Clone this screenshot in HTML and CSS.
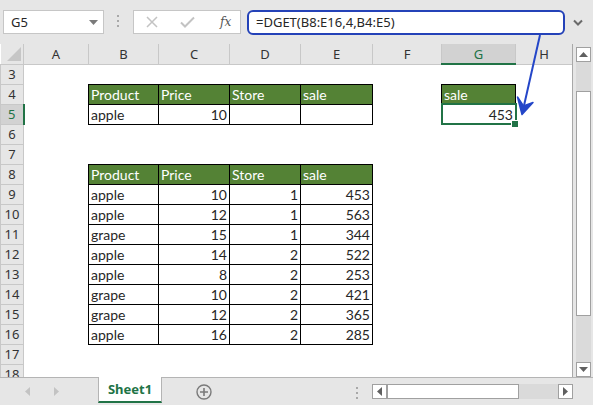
FILE: index.html
```html
<!DOCTYPE html>
<html lang="en">
<head>
    <meta charset="UTF-8">
    <title>DGET - Sheet1</title>
    <link rel="stylesheet" href="styles.css">
</head>
<body>
    <div class="formula-bar">
        <div class="name-box">
            <span>G5</span>
            <svg class="caret" width="9" height="5" viewBox="0 0 9 5"><path d="M0 0H9L4.5 5Z" fill="#7a7a7a"/></svg>
        </div>
        <div class="grip"><i></i><i></i><i></i></div>
        <div class="fx-box">
            <svg width="12" height="12" viewBox="0 0 12 12"><path d="M1 1L11 11M11 1L1 11" stroke="#c3c3c3" stroke-width="1.5"/></svg>
            <svg width="15" height="12" viewBox="0 0 15 12"><path d="M1 6.5L5 10.5L14 1.5" stroke="#c3c3c3" stroke-width="2" fill="none"/></svg>
            <span class="fx">fx</span>
        </div>
        <div class="formula">=DGET(B8:E16,4,B4:E5)</div>
        <svg class="expand" width="10" height="7" viewBox="0 0 10 7"><path d="M1 1.5L5 5.5L9 1.5" stroke="#6a6a6a" stroke-width="2" fill="none"/></svg>
    </div>

    <div class="main">
        <div class="sheet">
            <table class="grid">
                <colgroup>
                    <col class="c-rh"><col class="c-a"><col class="c-b"><col class="c-c"><col class="c-d">
                    <col class="c-e"><col class="c-f"><col class="c-g"><col class="c-h">
                </colgroup>
                <tr class="colhead">
                    <th class="corner"><svg width="14" height="14" viewBox="0 0 14 14"><path d="M14 0V14H0Z" fill="#c6c6c6"/></svg></th>
                    <th>A</th><th>B</th><th>C</th><th>D</th><th>E</th><th>F</th><th class="sel">G</th><th>H</th>
                </tr>
                <tr><th class="rh">3</th><td></td><td></td><td></td><td></td><td></td><td></td><td></td><td></td></tr>
                <tr>
                    <th class="rh">4</th><td></td>
                    <td class="t h">Product</td><td class="t h">Price</td><td class="t h">Store</td><td class="t h">sale</td>
                    <td></td><td class="t h">sale</td><td></td>
                </tr>
                <tr>
                    <th class="rh sel">5</th><td></td>
                    <td class="t">apple</td><td class="t n">10</td><td class="t"></td><td class="t"></td>
                    <td></td><td class="t n active">453</td><td></td>
                </tr>
                <tr><th class="rh">6</th><td></td><td></td><td></td><td></td><td></td><td></td><td></td><td></td></tr>
                <tr><th class="rh">7</th><td></td><td></td><td></td><td></td><td></td><td></td><td></td><td></td></tr>
                <tr>
                    <th class="rh">8</th><td></td>
                    <td class="t h">Product</td><td class="t h">Price</td><td class="t h">Store</td><td class="t h">sale</td>
                    <td></td><td></td><td></td>
                </tr>
                <tr><th class="rh">9</th><td></td><td class="t">apple</td><td class="t n">10</td><td class="t n">1</td><td class="t n">453</td><td></td><td></td><td></td></tr>
                <tr><th class="rh">10</th><td></td><td class="t">apple</td><td class="t n">12</td><td class="t n">1</td><td class="t n">563</td><td></td><td></td><td></td></tr>
                <tr><th class="rh">11</th><td></td><td class="t">grape</td><td class="t n">15</td><td class="t n">1</td><td class="t n">344</td><td></td><td></td><td></td></tr>
                <tr><th class="rh">12</th><td></td><td class="t">apple</td><td class="t n">14</td><td class="t n">2</td><td class="t n">522</td><td></td><td></td><td></td></tr>
                <tr><th class="rh">13</th><td></td><td class="t">apple</td><td class="t n">8</td><td class="t n">2</td><td class="t n">253</td><td></td><td></td><td></td></tr>
                <tr><th class="rh">14</th><td></td><td class="t">grape</td><td class="t n">10</td><td class="t n">2</td><td class="t n">421</td><td></td><td></td><td></td></tr>
                <tr><th class="rh">15</th><td></td><td class="t">grape</td><td class="t n">12</td><td class="t n">2</td><td class="t n">365</td><td></td><td></td><td></td></tr>
                <tr><th class="rh">16</th><td></td><td class="t">apple</td><td class="t n">16</td><td class="t n">2</td><td class="t n">285</td><td></td><td></td><td></td></tr>
                <tr><th class="rh">17</th><td></td><td></td><td></td><td></td><td></td><td></td><td></td><td></td></tr>
                <tr><th class="rh">18</th><td></td><td></td><td></td><td></td><td></td><td></td><td></td><td></td></tr>
            </table>
        </div>
        <div class="vscroll">
            <div class="sb-btn"><svg width="9" height="5" viewBox="0 0 9 5"><path d="M0 5H9L4.5 0Z" fill="#606060"/></svg></div>
            <div class="sb-track">
                <div class="sb-gap-top"></div>
                <div class="sb-thumb"></div>
                <div class="sb-gap"></div>
            </div>
            <div class="sb-btn"><svg width="9" height="5" viewBox="0 0 9 5"><path d="M0 0H9L4.5 5Z" fill="#606060"/></svg></div>
        </div>
    </div>

    <div class="tabbar">
        <div class="nav">
            <svg width="5" height="9" viewBox="0 0 5 9"><path d="M5 0V9L0 4.5Z" fill="#c3c3c3"/></svg>
            <svg width="5" height="9" viewBox="0 0 5 9"><path d="M0 0V9L5 4.5Z" fill="#c3c3c3"/></svg>
        </div>
        <div class="tab">Sheet1</div>
        <div class="add">
            <svg width="16" height="16" viewBox="0 0 16 16"><circle cx="8" cy="8" r="7" stroke="#7a7a7a" stroke-width="1.4" fill="none"/><path d="M8 4V12M4 8H12" stroke="#7a7a7a" stroke-width="1.6"/></svg>
        </div>
        <div class="grip h-grip"><i></i><i></i><i></i></div>
        <div class="hscroll">
            <div class="sb-btn"><svg width="5" height="9" viewBox="0 0 5 9"><path d="M5 0V9L0 4.5Z" fill="#606060"/></svg></div>
            <div class="h-thumb"></div>
            <div class="h-gap"></div>
            <div class="sb-btn"><svg width="5" height="9" viewBox="0 0 5 9"><path d="M0 0V9L5 4.5Z" fill="#606060"/></svg></div>
        </div>
    </div>

    <!-- callout arrow from the formula box to the result cell -->
    <svg class="callout" width="593" height="405" viewBox="0 0 593 405">
        <path d="M540 35L523 110" stroke="#2446c8" stroke-width="2" fill="none"/>
        <path d="M517.5 97L522 114.5L533 102.5L523.5 106Z" fill="#2446c8" stroke="#2446c8" stroke-width="1.5" stroke-linejoin="round"/>
    </svg>
</body>
</html>
```

FILE: styles.css
```css
:root {
    --chrome: #e6e6e6;
    --line: #c8c8c8;
    --head-sel: #d2d2d2;
    --excel-green: #217346;
    --fill-green: #548235;
    --text: #262626;
}

* {
    box-sizing: border-box;
    margin: 0;
    padding: 0;
}

body {
    width: 593px;
    height: 405px;
    overflow: hidden;
    position: relative;
    background-color: var(--chrome);
    font-family: 'Noto Sans', 'Open Sans', sans-serif;
    color: var(--text);
}

/* formula bar */
.formula-bar {
    height: 44px;
    display: flex;
    align-items: flex-start;
    padding: 10px 0 0 3px;
}

.name-box {
    width: 101px;
    height: 24px;
    background: #fff;
    border: 1px solid #c6c6c6;
    display: flex;
    align-items: center;
    justify-content: space-between;
    padding: 0 5px 0 7px;
    font-size: 13px;
}

.grip {
    display: flex;
    flex-direction: column;
    gap: 3px;
    margin: 5px 14px 0 13px;
}

.grip i {
    display: block;
    width: 2px;
    height: 2px;
    background: #a8a8a8;
}

.fx-box {
    width: 108px;
    height: 24px;
    background: #fff;
    border: 1px solid #c6c6c6;
    display: flex;
    align-items: center;
    gap: 22px;
    padding-left: 12px;
}

.fx {
    font-family: 'DejaVu Serif', serif;
    font-style: italic;
    font-size: 12px;
    color: #555;
    margin-left: 3px;
}

.formula {
    width: 318px;
    height: 25px;
    margin-left: 6px;
    background: #fff;
    border: 2px solid #2442b8;
    border-radius: 6px;
    font-size: 13px;
    line-height: 21px;
    padding-left: 7px;
}

.expand {
    margin: 9px 0 0 8px;
}

/* sheet */
.main {
    display: flex;
    height: 333px;
}

.sheet {
    width: 573px;
    height: 333px;
    overflow: hidden;
    background: #fff;
    border-right: 1px solid #a8a8a8;
}

.grid {
    border-collapse: collapse;
    table-layout: fixed;
    width: 572px;
}

.c-rh { width: 23px; }
.c-a { width: 65px; }
.c-b { width: 70px; }
.c-c { width: 71px; }
.c-d { width: 71px; }
.c-e { width: 72px; }
.c-f { width: 69px; }
.c-g { width: 74px; }
.c-h { width: 57px; }

.grid tr {
    height: 20px;
}

.grid th {
    background: var(--chrome);
    font-weight: normal;
    font-size: 13px;
    color: #333;
    border: 1px solid var(--line);
    border-top: none;
    text-align: center;
    padding: 0;
}

.colhead th {
    border-left: none;
    border-bottom: 1px solid var(--line);
}

.corner {
    text-align: right;
    vertical-align: bottom;
}

.corner svg {
    display: block;
    margin: 0 2px 3px auto;
}

.grid th.sel {
    background: var(--head-sel);
    color: var(--excel-green);
}

.colhead th.sel {
    border-bottom: 2px solid var(--excel-green);
}

.rh.sel {
    border-right: 2px solid var(--excel-green);
}

.grid td {
    font-family: 'Lato', sans-serif;
    font-size: 14px;
    padding: 0 2px;
    line-height: 18px;
    vertical-align: bottom;
    white-space: nowrap;
    overflow: hidden;
}

.grid td.t {
    border: 1px solid #000;
}

.grid td.h {
    background: var(--fill-green);
    color: #fff;
}

.grid td.n {
    text-align: right;
}

.grid td.active {
    position: relative;
    overflow: visible;
    outline: 2px solid var(--excel-green);
    outline-offset: -1px;
}

.grid td.active::after {
    content: "";
    position: absolute;
    right: -4px;
    bottom: -4px;
    width: 6px;
    height: 6px;
    background: var(--excel-green);
    border: 1px solid #fff;
}

/* vertical scrollbar */
.vscroll {
    width: 15px;
    margin: 3px 0 0 3px;
    display: flex;
    flex-direction: column;
    height: 330px;
}

.sb-btn {
    width: 15px;
    height: 15px;
    background: #fff;
    border: 1px solid #a0a0a0;
    display: flex;
    align-items: center;
    justify-content: center;
    flex-shrink: 0;
}

.sb-track {
    flex: 1;
    display: flex;
    flex-direction: column;
    background: #dadada;
}

.sb-gap-top {
    height: 29px;
}

.sb-thumb {
    height: 225px;
    background: #fff;
    border: 1px solid #a0a0a0;
}

.sb-gap {
    flex: 1;
}

/* sheet tabs */
.tabbar {
    height: 28px;
    display: flex;
    align-items: stretch;
    border-top: 1px solid #b4b4b4;
}

.nav {
    width: 98px;
    display: flex;
    align-items: center;
    gap: 24px;
    padding-left: 25px;
}

.tab {
    width: 64px;
    height: 26px;
    margin-top: -1px;
    background: #fff;
    border: 1px solid #b4b4b4;
    border-top: none;
    border-bottom: 2px solid var(--excel-green);
    color: var(--excel-green);
    font-weight: bold;
    font-size: 13px;
    text-align: center;
    line-height: 24px;
}

.add {
    display: flex;
    align-items: center;
    margin-left: 34px;
}

.h-grip {
    margin: 9px 14px 0 144px;
}

.hscroll {
    display: flex;
    height: 15px;
    margin-top: 6px;
    width: 201px;
}

.h-thumb {
    width: 132px;
    background: #fff;
    border: 1px solid #a0a0a0;
}

.h-gap {
    flex: 1;
    background: #dadada;
}

.callout {
    position: absolute;
    left: 0;
    top: 0;
    pointer-events: none;
}
```
